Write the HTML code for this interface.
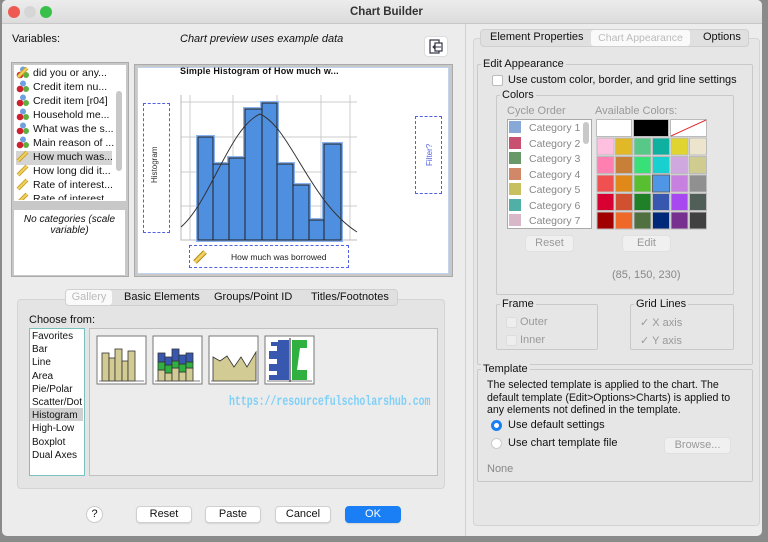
<!DOCTYPE html>
<html><head><meta charset="utf-8"><style>
*{box-sizing:border-box;margin:0;padding:0}
body{width:768px;height:542px;overflow:hidden;background:#8a8a8a;font-family:"Liberation Sans",sans-serif;font-size:11px;color:#111;position:relative}
.a{position:absolute}
.win{left:2px;top:0;width:760px;height:536px;background:#ececec;border-radius:5px;overflow:hidden}
.title{left:0;top:0;width:760px;height:24px;background:linear-gradient(#ececec,#dcdcdc);border-bottom:1px solid #c8c8c8}
.dot{width:12px;height:12px;border-radius:6px;top:6px}
.grp{border:1px solid #c9c9c9;border-radius:2px}
.lg{background:#ececec;padding:0 2px;font-size:11px}
.btn{background:#fff;border:1px solid #d0d0d0;border-radius:4px;text-align:center;font-size:11px;line-height:15px;box-shadow:0 1px 1px rgba(0,0,0,.1)}
.gr{color:#999}
</style></head><body>
<div class="a win">
 <div class="a title"></div>
 <div class="a dot" style="left:6px;background:#ee5a52"></div>
 <div class="a dot" style="left:22px;background:#d6d6d6"></div>
 <div class="a dot" style="left:38px;background:#39c04a"></div>
 <div class="a" style="left:348px;top:6px;font-weight:bold;font-size:11.5px;color:#333">Chart Builder</div>
</div>

<!-- left top -->
<div class="a" style="left:12px;top:33px;font-size:11px">Variables:</div>
<div class="a" style="left:180px;top:33px;font-style:italic;font-size:11px">Chart preview uses example data</div>
<div class="a" style="left:424px;top:36px;width:24px;height:21px;background:#fff;border-radius:4px;border:1px solid #ddd"><svg width="22" height="19"><rect x="5" y="3" width="9" height="13" fill="none" stroke="#334" stroke-width="1.2"/><rect x="10" y="6" width="7" height="8" fill="#fff" stroke="#334" stroke-width="1.2"/><path d="M16 10H8M10 8l-2 2 2 2" stroke="#334" fill="none"/></svg></div>

<div class="a" style="left:11px;top:62px;width:118px;height:215px;background:#c8c8c8;border:1px solid #aaa"></div>
<div class="a" style="left:14px;top:65px;width:112px;height:136px;background:#fff">
 <div class="a" style="left:102px;top:26px;width:6px;height:80px;background:#c8c8c8;border-radius:3px"></div>
 <div class="a" style="left:2px;top:86px;width:96px;height:14px;background:#d4d4d4"></div>
</div>
<div class="a" style="left:16px;top:66px;width:100px;height:134px;overflow:hidden;font-size:10.5px">
 <svg class="a" style="left:0;top:0" width="14" height="140">
  <g id="n"><circle cx="7" cy="3.5" r="3" fill="#6fa0e0"/><circle cx="4" cy="9" r="3.3" fill="#d02030"/><circle cx="10" cy="9" r="3" fill="#60b040"/></g>
  <use href="#n" y="14"/><use href="#n" y="28"/><use href="#n" y="42"/><use href="#n" y="56"/><use href="#n" y="70"/>
  <g id="r"><path d="M2 11L11 2" stroke="#c9a020" stroke-width="4"/><path d="M2 11L11 2" stroke="#f0d060" stroke-width="2"/></g>
  <use href="#r" y="84"/><use href="#r" y="98"/><use href="#r" y="112"/><use href="#r" y="126"/>
 </svg>
 <div class="a" style="left:17px;top:0;line-height:14px">did you or any...<br>Credit item nu...<br>Credit item [r04]<br>Household me...<br>What was the s...<br>Main reason of ...<br>How much was...<br>How long did it...<br>Rate of interest...<br>Rate of interest</div>
</div>
<div class="a" style="left:14px;top:210px;width:111px;height:65px;background:#fff;font-style:italic;font-size:10px;text-align:center;padding-top:4px;line-height:11px">No categories (scale<br>variable)</div>

<!-- preview -->
<div class="a" style="left:134px;top:64px;width:319px;height:213px;background:#c8c8c8;border:1px solid #aaa"></div>
<div class="a" style="left:137px;top:67px;width:312px;height:207px;background:#fff;border:1px solid #c0d4f0"></div>
<div class="a" style="left:180px;top:66px;font-weight:bold;font-size:9px;letter-spacing:.2px">Simple Histogram of How much w...</div>
<div class="a" style="left:143px;top:103px;width:27px;height:130px;border:1px dashed #5060e0"></div>
<div class="a" style="left:150px;top:183px;transform:rotate(-90deg);transform-origin:0 0;font-size:8px;color:#333">Histogram</div>
<div class="a" style="left:415px;top:116px;width:27px;height:78px;border:1px dashed #5060e0"></div>
<div class="a" style="left:425px;top:166px;transform:rotate(-90deg);transform-origin:0 0;font-size:8px;color:#5060e0">Filter?</div>
<div class="a" style="left:189px;top:245px;width:160px;height:23px;border:1px dashed #5060e0"></div>
<svg class="a" style="left:193px;top:250px" width="14" height="14"><path d="M2 12L12 2" stroke="#b08810" stroke-width="5"/><path d="M2 12L12 2" stroke="#f0d060" stroke-width="3"/></svg>
<div class="a" style="left:231px;top:252px;font-size:8.5px;color:#222">How much was borrowed</div>
<svg class="a" style="left:180px;top:92px" width="180" height="152">
 <g stroke="#ccc" stroke-width="1">
  <path d="M1 10H177M1 45H177M1 80H177M1 114H177M10 3V148M53 3V148M97 3V148M141 3V148M170 3V148"/>
 </g>
 <path d="M1 3V148H177" stroke="#bbb" fill="none"/>
 <path d="M18 45h15v27h16v-6h16v-49h17v-6h15v61h16v21h16v35h15v-76h17V148H18z" fill="none" stroke="#8ab4f0" stroke-width="4"/>
 <g fill="#4f8fe0" stroke="#222" stroke-width="1" >
  <path d="M18 45h15v103h-15z" /><path d="M33 72h16v76h-16z"/><path d="M49 66h16v82h-16z"/><path d="M65 17h17v131h-17z"/><path d="M82 11h15v137h-15z"/><path d="M97 72h16v76h-16z"/><path d="M113 93h16v55h-16z"/><path d="M129 128h15v20h-15z"/><path d="M144 52h17v96h-17z"/>
 </g>
 <path d="M1 135C30 110 50 35 80 22C110 35 130 110 177 140" fill="none" stroke="#333" stroke-width="1"/>
</svg>

<!-- left tabs -->
<div class="a" style="left:17px;top:299px;width:428px;height:190px;background:#e4e4e4;border:1px solid #d4d4d4;border-radius:4px"></div>
<div class="a" style="left:65px;top:289px;width:333px;height:17px;background:#e0e0e0;border:1px solid #d0d0d0;border-radius:4px"></div>
<div class="a" style="left:66px;top:290px;width:46px;height:15px;background:#fafafa;border-radius:3px;color:#bbb;text-align:center;line-height:15px">Gallery</div>
<div class="a" style="left:124px;top:291px">Basic Elements</div>
<div class="a" style="left:214px;top:291px">Groups/Point ID</div>
<div class="a" style="left:311px;top:291px">Titles/Footnotes</div>
<div class="a" style="left:29px;top:314px">Choose from:</div>
<div class="a" style="left:29px;top:328px;width:56px;height:148px;background:#fff;border:1px solid #7ac0c0"></div>
<div class="a" style="left:30px;top:408px;width:53px;height:13px;background:#d0d0d0"></div>
<div class="a" style="left:32px;top:330px;font-size:10px;line-height:13.2px">Favorites<br>Bar<br>Line<br>Area<br>Pie/Polar<br>Scatter/Dot<br>Histogram<br>High-Low<br>Boxplot<br>Dual Axes</div>
<div class="a" style="left:89px;top:328px;width:349px;height:148px;border:1px solid #c0c0c0;background:#ececec"></div>
<svg class="a" style="left:96px;top:335px" width="220" height="52">
 <g fill="#fff" stroke="#777"><rect x="1" y="1" width="49" height="48"/><rect x="57" y="1" width="49" height="48"/><rect x="113" y="1" width="49" height="48"/><rect x="169" y="1" width="49" height="48"/></g>
 <g fill="#d2cc94" stroke="#333" stroke-width=".8"><rect x="6" y="18" width="7" height="28"/><rect x="13" y="23" width="6" height="23"/><rect x="19" y="14" width="7" height="32"/><rect x="26" y="26" width="6" height="20"/><rect x="32" y="16" width="7" height="30"/></g>
 <g stroke="#333" stroke-width=".8"><rect x="62" y="35" width="7" height="11" fill="#d2cc94"/><rect x="62" y="27" width="7" height="8" fill="#30b040"/><rect x="62" y="18" width="7" height="9" fill="#3858b0"/>
 <rect x="69" y="38" width="7" height="8" fill="#d2cc94"/><rect x="69" y="30" width="7" height="8" fill="#30b040"/><rect x="69" y="22" width="7" height="8" fill="#3858b0"/>
 <rect x="76" y="33" width="7" height="13" fill="#d2cc94"/><rect x="76" y="26" width="7" height="7" fill="#30b040"/><rect x="76" y="14" width="7" height="12" fill="#3858b0"/>
 <rect x="83" y="37" width="7" height="9" fill="#d2cc94"/><rect x="83" y="29" width="7" height="8" fill="#30b040"/><rect x="83" y="20" width="7" height="9" fill="#3858b0"/>
 <rect x="90" y="33" width="7" height="13" fill="#d2cc94"/><rect x="90" y="27" width="7" height="6" fill="#30b040"/><rect x="90" y="18" width="7" height="9" fill="#3858b0"/></g>
 <path d="M117 46V22l7 4 7-5 7 11 7-10 6 10 9-15v29z" fill="#d2cc94" stroke="#333" stroke-width=".8"/>
 <g stroke="#555" stroke-width=".8"><path d="M3 46h45M59 46h45M115 46h45M171 46h45"/></g>
 <path d="M182 5h11v40h-20v-5h8v-4h-8v-7h8v-5h-8v-8h8v-5h-6v-4h7z" fill="#3858b0"/>
 <path d="M196 5h15v8h-7l-3 22h10v10h-15z" fill="#30b040"/>
 <path d="M194 3v44" stroke="#222"/>
</svg>
<div class="a" style="left:229px;top:394px;font-family:'Liberation Mono',monospace;font-weight:bold;font-size:9.9px;color:#80d0f8;transform:scaleY(1.35);transform-origin:0 0">https://resourcefulscholarshub.com</div>

<div class="a" style="left:86px;top:506px;width:17px;height:17px;border-radius:9px;background:#fff;border:1px solid #ccc;text-align:center;line-height:15px;font-size:11px">?</div>
<div class="a btn" style="left:136px;top:506px;width:56px;height:17px">Reset</div>
<div class="a btn" style="left:205px;top:506px;width:56px;height:17px">Paste</div>
<div class="a btn" style="left:275px;top:506px;width:56px;height:17px">Cancel</div>
<div class="a btn" style="left:345px;top:506px;width:56px;height:17px;background:#1a7ff5;border-color:#1a7ff5;color:#fff">OK</div>

<!-- right panel -->
<div class="a" style="left:465px;top:24px;width:1px;height:512px;background:#d0d0d0"></div>
<div class="a" style="left:473px;top:38px;width:287px;height:488px;background:#e6e6e6;border:1px solid #d4d4d4;border-radius:4px"></div>
<div class="a" style="left:480px;top:29px;width:269px;height:18px;background:#e0e0e0;border:1px solid #d0d0d0;border-radius:4px"></div>
<div class="a" style="left:490px;top:31px">Element Properties</div>
<div class="a" style="left:591px;top:30px;width:99px;height:16px;background:#fafafa;border-radius:3px;color:#bbb;text-align:center;line-height:16px;font-size:10.5px">Chart Appearance</div>
<div class="a" style="left:703px;top:31px">Options</div>

<div class="a grp" style="left:477px;top:64px;width:276px;height:301px"></div>
<div class="a lg" style="left:481px;top:58px;background:#e6e6e6">Edit Appearance</div>
<div class="a" style="left:492px;top:75px;width:11px;height:11px;background:#fff;border:1px solid #bbb;border-radius:2px"></div>
<div class="a" style="left:508px;top:74px">Use custom color, border, and grid line settings</div>
<div class="a grp" style="left:496px;top:95px;width:238px;height:200px"></div>
<div class="a lg" style="left:500px;top:89px;background:#e6e6e6">Colors</div>
<div class="a gr" style="left:507px;top:105px">Cycle Order</div>
<div class="a gr" style="left:595px;top:105px">Available Colors:</div>
<div class="a" style="left:507px;top:119px;width:85px;height:110px;background:#fff;border:1px solid #aaa;overflow:hidden">
 <div class="a" style="left:75px;top:2px;width:6px;height:22px;background:#c8c8c8;border-radius:3px"></div>
</div>
<div class="a" style="left:509px;top:121px;font-size:10.5px;color:#888;line-height:15.5px">
 <div><span style="display:inline-block;width:12px;height:12px;background:#88a8d8;vertical-align:-2px;margin-right:8px"></span>Category 1</div>
 <div><span style="display:inline-block;width:12px;height:12px;background:#c85070;vertical-align:-2px;margin-right:8px"></span>Category 2</div>
 <div><span style="display:inline-block;width:12px;height:12px;background:#689868;vertical-align:-2px;margin-right:8px"></span>Category 3</div>
 <div><span style="display:inline-block;width:12px;height:12px;background:#d08868;vertical-align:-2px;margin-right:8px"></span>Category 4</div>
 <div><span style="display:inline-block;width:12px;height:12px;background:#c8c060;vertical-align:-2px;margin-right:8px"></span>Category 5</div>
 <div><span style="display:inline-block;width:12px;height:12px;background:#50b0a8;vertical-align:-2px;margin-right:8px"></span>Category 6</div>
 <div><span style="display:inline-block;width:12px;height:12px;background:#d8b8c8;vertical-align:-2px;margin-right:8px"></span>Category 7</div>
</div>
<svg class="a" style="left:596px;top:119px" width="112" height="112">
 <rect x="0.5" y="0.5" width="35" height="17" fill="#fff" stroke="#bbb"/><rect x="37.5" y="0.5" width="35" height="17" fill="#000" stroke="#bbb"/><rect x="74.5" y="0.5" width="36" height="17" fill="#fff" stroke="#bbb"/><path d="M75 17L110 1" stroke="#e03030"/>
 <g stroke="#bbb">
 <rect x="1" y="19" width="17" height="17" fill="#ffc0e0"/><rect x="19.5" y="19" width="17" height="17" fill="#e0b828"/><rect x="38" y="19" width="17" height="17" fill="#58c888"/><rect x="56.5" y="19" width="17" height="17" fill="#10b0a0"/><rect x="75" y="19" width="17" height="17" fill="#e0d430"/><rect x="93.5" y="19" width="17" height="17" fill="#ece4cc"/>
 <rect x="1" y="37.5" width="17" height="17" fill="#ff80b0"/><rect x="19.5" y="37.5" width="17" height="17" fill="#c88038"/><rect x="38" y="37.5" width="17" height="17" fill="#38e078"/><rect x="56.5" y="37.5" width="17" height="17" fill="#18d0d0"/><rect x="75" y="37.5" width="17" height="17" fill="#d0a8e0"/><rect x="93.5" y="37.5" width="17" height="17" fill="#d0cc90"/>
 <rect x="1" y="56" width="17" height="17" fill="#f05050"/><rect x="19.5" y="56" width="17" height="17" fill="#e08818"/><rect x="38" y="56" width="17" height="17" fill="#58c030"/><rect x="56.5" y="56" width="17" height="17" fill="#5096e6" stroke="#666"/><rect x="75" y="56" width="17" height="17" fill="#c880e0"/><rect x="93.5" y="56" width="17" height="17" fill="#909090"/>
 <rect x="1" y="74.5" width="17" height="17" fill="#d80030"/><rect x="19.5" y="74.5" width="17" height="17" fill="#d05030"/><rect x="38" y="74.5" width="17" height="17" fill="#208028"/><rect x="56.5" y="74.5" width="17" height="17" fill="#3858b0"/><rect x="75" y="74.5" width="17" height="17" fill="#a848f0"/><rect x="93.5" y="74.5" width="17" height="17" fill="#506058"/>
 <rect x="1" y="93" width="17" height="17" fill="#a00000"/><rect x="19.5" y="93" width="17" height="17" fill="#f06828"/><rect x="38" y="93" width="17" height="17" fill="#507040"/><rect x="56.5" y="93" width="17" height="17" fill="#002878"/><rect x="75" y="93" width="17" height="17" fill="#783090"/><rect x="93.5" y="93" width="17" height="17" fill="#404040"/>
 </g>
</svg>
<div class="a btn" style="left:525px;top:235px;width:49px;height:17px;color:#999;background:#f0f0f0;box-shadow:none;border-color:#e0e0e0">Reset</div>
<div class="a btn" style="left:622px;top:235px;width:49px;height:17px;color:#999;background:#f0f0f0;box-shadow:none;border-color:#e0e0e0">Edit</div>
<div class="a gr" style="left:612px;top:269px;color:#888">(85, 150, 230)</div>

<div class="a grp" style="left:496px;top:304px;width:102px;height:46px"></div>
<div class="a lg" style="left:500px;top:298px;background:#e6e6e6">Frame</div>
<div class="a" style="left:506px;top:317px;width:11px;height:11px;background:#eee;border:1px solid #ddd;border-radius:2px"></div>
<div class="a gr" style="left:520px;top:316px">Outer</div>
<div class="a" style="left:506px;top:335px;width:11px;height:11px;background:#eee;border:1px solid #ddd;border-radius:2px"></div>
<div class="a gr" style="left:520px;top:334px">Inner</div>
<div class="a grp" style="left:630px;top:304px;width:104px;height:46px"></div>
<div class="a lg" style="left:634px;top:298px;background:#e6e6e6">Grid Lines</div>
<div class="a gr" style="left:640px;top:316px">✓ X axis</div>
<div class="a gr" style="left:640px;top:334px">✓ Y axis</div>

<div class="a grp" style="left:477px;top:369px;width:276px;height:113px"></div>
<div class="a lg" style="left:481px;top:363px;background:#e6e6e6">Template</div>
<div class="a" style="left:487px;top:379px;line-height:12.7px;font-size:10.6px">The selected template is applied to the chart. The<br>default template (Edit&gt;Options&gt;Charts) is applied to<br>any elements not defined in the template.</div>
<div class="a" style="left:491px;top:420px;width:11px;height:11px;border-radius:6px;border:3px solid #1a7ff5;background:#fff"></div>
<div class="a" style="left:508px;top:419px">Use default settings</div>
<div class="a" style="left:491px;top:438px;width:11px;height:11px;border-radius:6px;border:1px solid #ccc;background:#fff"></div>
<div class="a" style="left:508px;top:437px">Use chart template file</div>
<div class="a btn" style="left:664px;top:437px;width:67px;height:17px;color:#999;background:#f0f0f0;box-shadow:none;border-color:#e0e0e0">Browse...</div>
<div class="a gr" style="left:487px;top:463px;color:#888">None</div>
</body></html>
